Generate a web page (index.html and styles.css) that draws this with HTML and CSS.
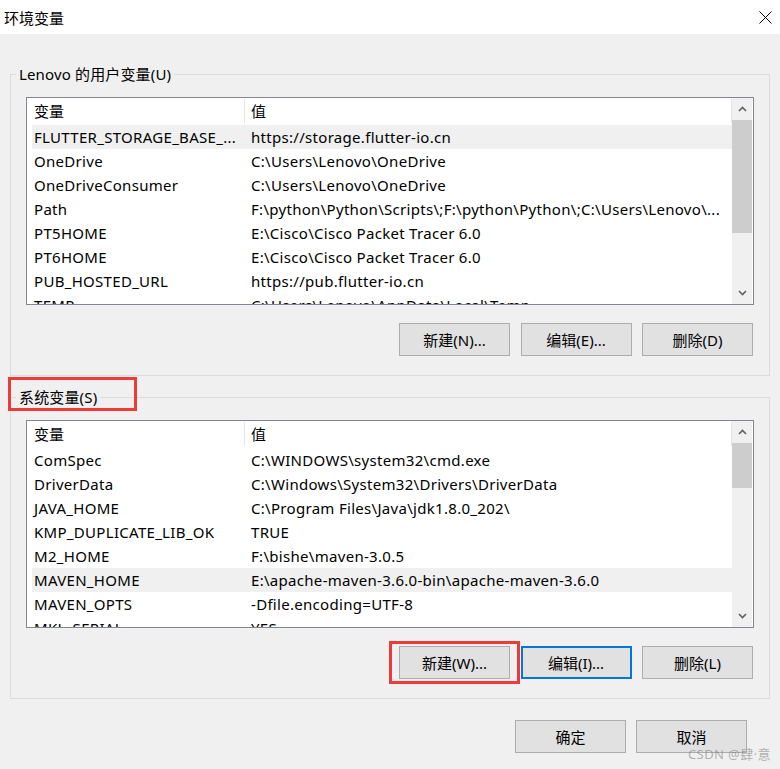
FILE: index.html
```html
<!DOCTYPE html>
<html>
<head>
    <meta charset="utf-8">
    <title>环境变量</title>
    <link rel="stylesheet" href="styles.css">
</head>
<body>
    <div class="window">
        <div class="titlebar">
            <span class="title">环境变量</span>
            <svg class="close" viewBox="0 0 13 13"><path d="M0.5 0.5L12.5 12.5M12.5 0.5L0.5 12.5" stroke="#000" stroke-width="1" fill="none"/></svg>
        </div>

        <div class="dialog">
            <fieldset class="group">
                <legend>Lenovo 的用户变量(U)</legend>
                <div class="list">
                    <div class="list-body">
                        <div class="list-head"><span class="col-name">变量</span><span class="col-value">值</span></div>
                        <div class="row selected"><span class="col-name">FLUTTER_STORAGE_BASE_...</span><span class="col-value">https://storage.flutter-io.cn</span></div>
                        <div class="row"><span class="col-name">OneDrive</span><span class="col-value">C:\Users\Lenovo\OneDrive</span></div>
                        <div class="row"><span class="col-name">OneDriveConsumer</span><span class="col-value">C:\Users\Lenovo\OneDrive</span></div>
                        <div class="row"><span class="col-name">Path</span><span class="col-value">F:\python\Python\Scripts\;F:\python\Python\;C:\Users\Lenovo\...</span></div>
                        <div class="row"><span class="col-name">PT5HOME</span><span class="col-value">E:\Cisco\Cisco Packet Tracer 6.0</span></div>
                        <div class="row"><span class="col-name">PT6HOME</span><span class="col-value">E:\Cisco\Cisco Packet Tracer 6.0</span></div>
                        <div class="row"><span class="col-name">PUB_HOSTED_URL</span><span class="col-value">https://pub.flutter-io.cn</span></div>
                        <div class="row"><span class="col-name">TEMP</span><span class="col-value">C:\Users\Lenovo\AppData\Local\Temp</span></div>
                    </div>
                    <div class="scrollbar">
                        <div class="scroll-arrow"><svg viewBox="0 0 9 6"><polyline points="1,5 4.5,1.5 8,5"/></svg></div>
                        <div class="scroll-track"><div class="scroll-thumb" style="height: 113px"></div></div>
                        <div class="scroll-arrow"><svg viewBox="0 0 9 6"><polyline points="1,1 4.5,4.5 8,1"/></svg></div>
                    </div>
                </div>
                <div class="button-row">
                    <button class="button">新建(N)...</button>
                    <button class="button">编辑(E)...</button>
                    <button class="button">删除(D)</button>
                </div>
            </fieldset>

            <fieldset class="group">
                <legend class="marked">系统变量(S)</legend>
                <div class="list">
                    <div class="list-body">
                        <div class="list-head"><span class="col-name">变量</span><span class="col-value">值</span></div>
                        <div class="row"><span class="col-name">ComSpec</span><span class="col-value">C:\WINDOWS\system32\cmd.exe</span></div>
                        <div class="row"><span class="col-name">DriverData</span><span class="col-value">C:\Windows\System32\Drivers\DriverData</span></div>
                        <div class="row"><span class="col-name">JAVA_HOME</span><span class="col-value">C:\Program Files\Java\jdk1.8.0_202\</span></div>
                        <div class="row"><span class="col-name">KMP_DUPLICATE_LIB_OK</span><span class="col-value">TRUE</span></div>
                        <div class="row"><span class="col-name">M2_HOME</span><span class="col-value">F:\bishe\maven-3.0.5</span></div>
                        <div class="row selected"><span class="col-name">MAVEN_HOME</span><span class="col-value">E:\apache-maven-3.6.0-bin\apache-maven-3.6.0</span></div>
                        <div class="row"><span class="col-name">MAVEN_OPTS</span><span class="col-value">-Dfile.encoding=UTF-8</span></div>
                        <div class="row"><span class="col-name">MKL_SERIAL</span><span class="col-value">YES</span></div>
                    </div>
                    <div class="scrollbar">
                        <div class="scroll-arrow"><svg viewBox="0 0 9 6"><polyline points="1,5 4.5,1.5 8,5"/></svg></div>
                        <div class="scroll-track"><div class="scroll-thumb" style="height: 45px"></div></div>
                        <div class="scroll-arrow"><svg viewBox="0 0 9 6"><polyline points="1,1 4.5,4.5 8,1"/></svg></div>
                    </div>
                </div>
                <div class="button-row">
                    <button class="button marked">新建(W)...</button>
                    <button class="button focused">编辑(I)...</button>
                    <button class="button">删除(L)</button>
                </div>
            </fieldset>

            <div class="footer">
                <button class="button">确定</button>
                <button class="button">取消</button>
            </div>
        </div>

        <div class="watermark">CSDN @肆·意</div>
    </div>
</body>
</html>
```

FILE: styles.css
```css
*,
*::before,
*::after {
    box-sizing: border-box;
}

body {
    margin: 0;
    width: 780px;
    height: 769px;
    overflow: hidden;
    font-family: "Noto Sans", "Noto Sans CJK SC", sans-serif;
    font-size: 15px;
    color: #000;
    background-color: #f0f0f0;
}

.window {
    position: relative;
    height: 769px;
}

.titlebar {
    height: 34px;
    display: flex;
    align-items: center;
    justify-content: space-between;
    padding: 0 8px 0 4px;
    background-color: #fff;
}

.title {
    font-family: "Noto Sans CJK SC", sans-serif;
}

.close {
    width: 13px;
    height: 13px;
}

.dialog {
    padding: 30px 10px 0;
}

.group {
    margin: 0;
    padding: 13px 15px 19px;
    border: 1px solid #dcdcdc;
    min-width: 0;
}

.group + .group {
    margin-top: 11px;
}

.group legend {
    position: relative;
    margin-left: -10px;
    padding: 0 3px;
    line-height: 20px;
    letter-spacing: 0.15px;
}

.marked::after {
    content: '';
    position: absolute;
    border: 3px solid #ef3a3a;
    pointer-events: none;
}

legend.marked::after {
    left: -8px;
    top: -10px;
    width: 129px;
    height: 34px;
}

.button.marked {
    position: relative;
}

.button.marked::after {
    left: -11px;
    right: -11px;
    top: -6px;
    bottom: -6px;
}

.list {
    display: flex;
    height: 208px;
    border: 1px solid #828790;
    background-color: #fff;
}

.list-body {
    flex: 1;
    min-width: 0;
    padding-left: 5px;
    overflow: hidden;
}

.list-head,
.row {
    display: flex;
    white-space: nowrap;
    line-height: 24px;
}

.list-head {
    height: 27px;
    padding: 1px 0 2px;
}

.row {
    height: 24px;
    letter-spacing: 0.3px;
}

.row.selected {
    background-color: #f0f0f0;
}

.col-name {
    flex-shrink: 0;
    width: 213px;
    padding-left: 2px;
    overflow: hidden;
}

.col-value {
    flex: 1;
    padding-left: 6px;
    overflow: hidden;
}

.list-head .col-name,
.list-head .col-value {
    border-right: 1px solid #e5e5e5;
}

.scrollbar {
    width: 20px;
    margin-right: 1px;
    display: flex;
    flex-direction: column;
    background-color: #f0f0f0;
}

.scroll-arrow {
    height: 22px;
    display: flex;
    align-items: center;
    justify-content: center;
}

.scroll-arrow svg {
    width: 9px;
    height: 6px;
    fill: none;
    stroke: #606060;
    stroke-width: 1.6;
}

.scroll-track {
    flex: 1;
}

.scroll-thumb {
    background-color: #cdcdcd;
}

.button-row {
    display: flex;
    justify-content: flex-end;
    gap: 10.5px;
    margin-top: 18px;
    padding-right: 1px;
}

.button {
    width: 111px;
    height: 33px;
    padding: 0;
    font: inherit;
    color: #000;
    background-color: #e1e1e1;
    border: 1px solid #adadad;
    border-radius: 0;
}

.button.focused {
    border: 2px solid #0078d7;
}

.footer {
    display: flex;
    justify-content: flex-end;
    gap: 10px;
    margin-top: 21px;
    padding-right: 23px;
}

.watermark {
    position: absolute;
    left: 688px;
    top: 744px;
    font-size: 13px;
    letter-spacing: 0.4px;
    color: rgba(110, 110, 110, 0.5);
    white-space: nowrap;
}
```
